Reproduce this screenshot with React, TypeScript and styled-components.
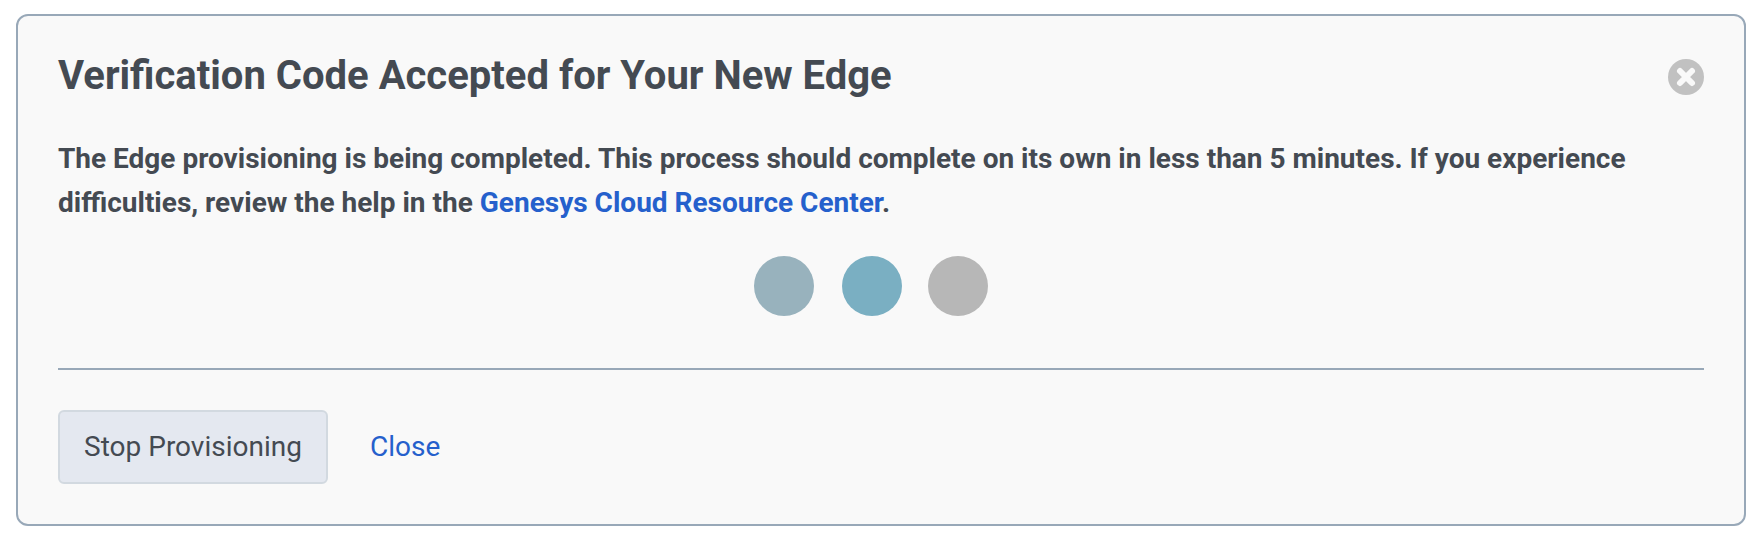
import React from "react";
import styled, { createGlobalStyle } from "styled-components";

const Global = createGlobalStyle`
  html, body { margin: 0; padding: 0; background: #ffffff; }
  body { font-family: Roboto, "Liberation Sans", sans-serif; }
`;

const Page = styled.div`
  width: 1758px;
  height: 544px;
  box-sizing: border-box;
  padding: 14px 12px 18px 16px;
`;

const Panel = styled.section`
  box-sizing: border-box;
  height: 512px;
  background: #f9f9f9;
  border: 2px solid #98a8b8;
  border-radius: 12px;
  padding: 25px 40px 0 40px;
  color: #444a52;
`;

const Header = styled.header`
  display: flex;
  align-items: flex-start;
  justify-content: space-between;
  height: 70px;
`;

const Title = styled.h1`
  margin: 0;
  font-size: 40px;
  line-height: 70px;
  font-weight: 700;
`;

const CloseIcon = styled.button`
  width: 36px;
  height: 36px;
  margin-top: 18px;
  padding: 0;
  border: 0;
  background: none;
  display: block;
`;

const Message = styled.p`
  margin: 26px 0 0;
  font-size: 28px;
  line-height: 44px;
  font-weight: 700;
`;

const Link = styled.a`
  color: #2560cc;
  text-decoration: none;
`;

const Loader = styled.div`
  display: flex;
  justify-content: center;
  margin-top: 31px;
  padding-right: 20px;
`;

const Dot = styled.span<{ $color: string; $offset?: number }>`
  width: 60px;
  height: 60px;
  border-radius: 50%;
  background: ${(p) => p.$color};
  margin-left: ${(p) => p.$offset ?? 0}px;
`;

const Divider = styled.hr`
  margin: 52px 0 0;
  border: 0;
  border-top: 2px solid #98a8b8;
`;

const Footer = styled.footer`
  display: flex;
  align-items: center;
  gap: 42px;
  margin-top: 40px;
`;

const StopButton = styled.button`
  box-sizing: border-box;
  width: 270px;
  height: 74px;
  background: #e4e8f0;
  border: 2px solid #d2d9e0;
  border-radius: 6px;
  color: #444a52;
  font-family: inherit;
  font-size: 28px;
  font-weight: 400;
  padding: 0 0 2px;
`;

const CloseLink = styled.a`
  color: #2560cc;
  font-size: 28px;
  text-decoration: none;
  padding-bottom: 2px;
`;

export default function App() {
  return (
    <Page>
      <Global />
      <Panel>
        <Header>
          <Title>Verification Code Accepted for Your New Edge</Title>
          <CloseIcon aria-label="Dismiss">
            <svg width="36" height="36" viewBox="0 0 36 36">
              <circle cx="18" cy="18" r="18" fill="#c1c1c1" />
              <path d="M12 12L24 24M24 12L12 24" stroke="#f9f9f9" strokeWidth="6" strokeLinecap="round" />
            </svg>
          </CloseIcon>
        </Header>
        <Message>
          The Edge provisioning is being completed. This process should complete on its own in less than 5 minutes. If you experience
          difficulties, review the help in the <Link href="#">Genesys Cloud Resource Center</Link>.
        </Message>
        <Loader>
          <Dot $color="#98b2bd" />
          <Dot $color="#7aafc2" $offset={28} />
          <Dot $color="#b7b7b7" $offset={26} />
        </Loader>
        <Divider />
        <Footer>
          <StopButton>Stop Provisioning</StopButton>
          <CloseLink href="#">Close</CloseLink>
        </Footer>
      </Panel>
    </Page>
  );
}
